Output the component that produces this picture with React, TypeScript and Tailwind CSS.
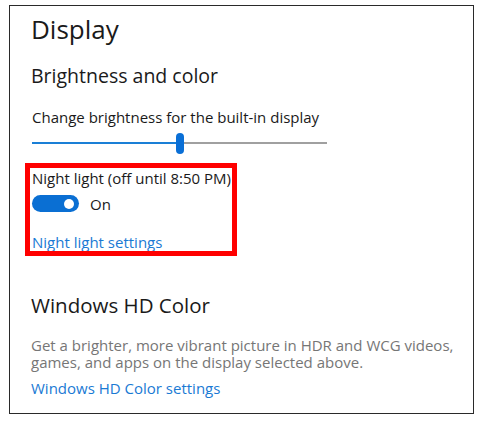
import React from "react";

const font = { fontFamily: '"Open Sans", "Noto Sans", sans-serif' };

export default function App() {
  return (
    <div className="w-[479px] h-[422px] bg-white overflow-hidden" style={font}>
      <div className="ml-[9px] mt-[5px] w-[465px] h-[409px] border-[1.5px] border-[#2a2a2a] bg-white pl-[21px] flex flex-col">
        <h1 className="mt-[7px] h-[32px] leading-[32px] text-[26px] font-normal text-[#1a1a1a]">Display</h1>
        <h2 className="mt-[19px] h-[24px] leading-[24px] text-[19.5px] font-normal text-[#1a1a1a]">Brightness and color</h2>
        <div className="mt-[19px] h-[20px] leading-[20px] text-[15px] text-[#1a1a1a] pl-[1px] whitespace-nowrap">
          Change brightness for the built-in display
        </div>
        <div className="mt-[6px] h-[21px] w-[295px] relative ml-[1px]">
          <div className="absolute left-0 top-[9px] h-[2px] w-[147px] bg-[#1a7fd6]" />
          <div className="absolute left-[147px] top-[9px] h-[2px] w-[148px] bg-[#a0a0a0]" />
          <div className="absolute left-[144px] top-0 h-[21px] w-[8px] rounded-full bg-[#0a6fd6]" />
        </div>
        <div className="mt-[9px] -ml-[6px] w-[212px] h-[93px] border-[5px] border-[#ff0000] pl-[2px] flex flex-col overflow-hidden">
          <div className="h-[20px] leading-[20px] text-[15px] text-[#1a1a1a] whitespace-nowrap">
            Night light (off until 8:50 PM)
          </div>
          <div className="mt-[7px] flex items-center h-[17px]">
            <div className="w-[47px] h-[17px] rounded-full bg-[#0a6fd3] relative shrink-0">
              <div className="absolute left-[32px] top-[3.5px] w-[10px] h-[10px] rounded-full bg-white" />
            </div>
            <span className="ml-[11px] text-[15px] leading-[20px] text-[#1a1a1a]">On</span>
          </div>
          <div className="mt-[20px] h-[20px] leading-[20px] text-[15px] text-[#1a7ad4] whitespace-nowrap">
            Night light settings
          </div>
        </div>
        <h2 className="mt-[37px] h-[24px] leading-[24px] text-[20.5px] font-normal text-[#1a1a1a]">Windows HD Color</h2>
        <p className="mt-[20px] w-[436px] leading-[17px] text-[15px] text-[#767676]">
          Get a brighter, more vibrant picture in HDR and WCG videos, games, and apps on the display selected above.
        </p>
        <div className="mt-[7px] h-[20px] leading-[20px] text-[15px] text-[#1a7ad4]">Windows HD Color settings</div>
      </div>
    </div>
  );
}
